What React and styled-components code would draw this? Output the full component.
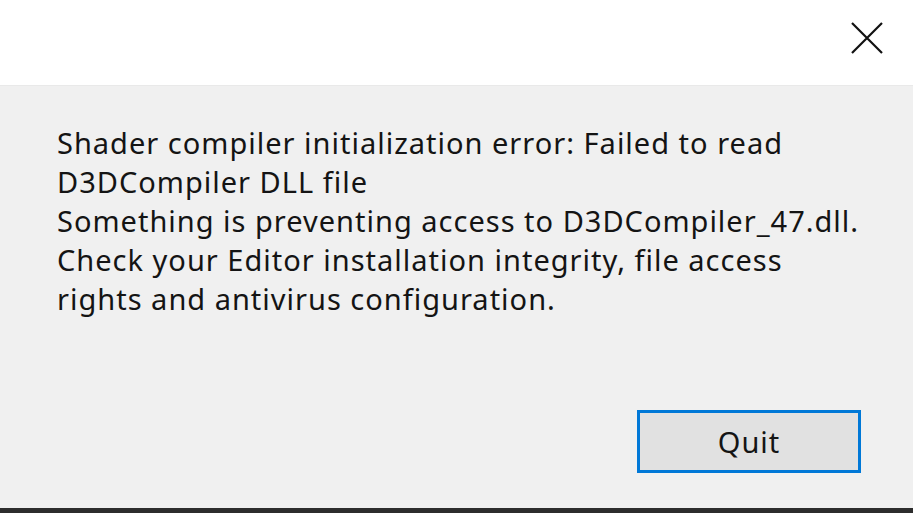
import React from "react";
import styled, { createGlobalStyle } from "styled-components";

const GlobalStyle = createGlobalStyle`
    html, body {
        margin: 0;
        padding: 0;
        background: #2d2d2d;
    }
    body {
        font-family: "Noto Sans", "Open Sans", sans-serif;
    }
`;

const App = () => {
    return (
        <>
            <GlobalStyle />
            <Dialog>
                <TitleBar>
                    <CloseButton aria-label="Close">
                        <svg width="32" height="32" viewBox="0 0 32 32">
                            <path
                                d="M1 1 L31 31 M31 1 L1 31"
                                stroke="#111"
                                strokeWidth="2.2"
                                fill="none"
                            />
                        </svg>
                    </CloseButton>
                </TitleBar>
                <Body>
                    <Message>
                        Shader compiler initialization error: Failed to read
                        <br />
                        D3DCompiler DLL file
                        <br />
                        Something is preventing access to D3DCompiler_47.dll.
                        <br />
                        Check your Editor installation integrity, file access
                        <br />
                        rights and antivirus configuration.
                    </Message>
                    <Actions>
                        <QuitButton>Quit</QuitButton>
                    </Actions>
                </Body>
            </Dialog>
        </>
    );
};

export default App;

const Dialog = styled.div`
    width: 913px;
    height: 508px;
    display: flex;
    flex-direction: column;
    background: #f0f0f0;
`;

const TitleBar = styled.div`
    height: 86px;
    background: #ffffff;
    display: flex;
    justify-content: flex-end;
    align-items: flex-start;
    border-bottom: 1px solid #e9e9e9;
    box-sizing: border-box;
`;

const CloseButton = styled.button`
    margin: 22px 30px 0 0;
    padding: 0;
    width: 32px;
    height: 32px;
    border: none;
    background: transparent;
    display: flex;
`;

const Body = styled.div`
    flex: 1;
    display: flex;
    flex-direction: column;
    justify-content: space-between;
    padding: 37px 52px 35px 57px;
`;

const Message = styled.p`
    margin: 0;
    font-size: 29px;
    line-height: 39px;
    letter-spacing: 1px;
    white-space: nowrap;
    color: #141414;
`;

const Actions = styled.div`
    display: flex;
    justify-content: flex-end;
`;

const QuitButton = styled.button`
    width: 224px;
    height: 63px;
    box-sizing: border-box;
    border: 3px solid #0078d7;
    background: #e1e1e1;
    font-family: inherit;
    font-size: 29px;
    letter-spacing: 1px;
    color: #141414;
    padding: 0;
`;
